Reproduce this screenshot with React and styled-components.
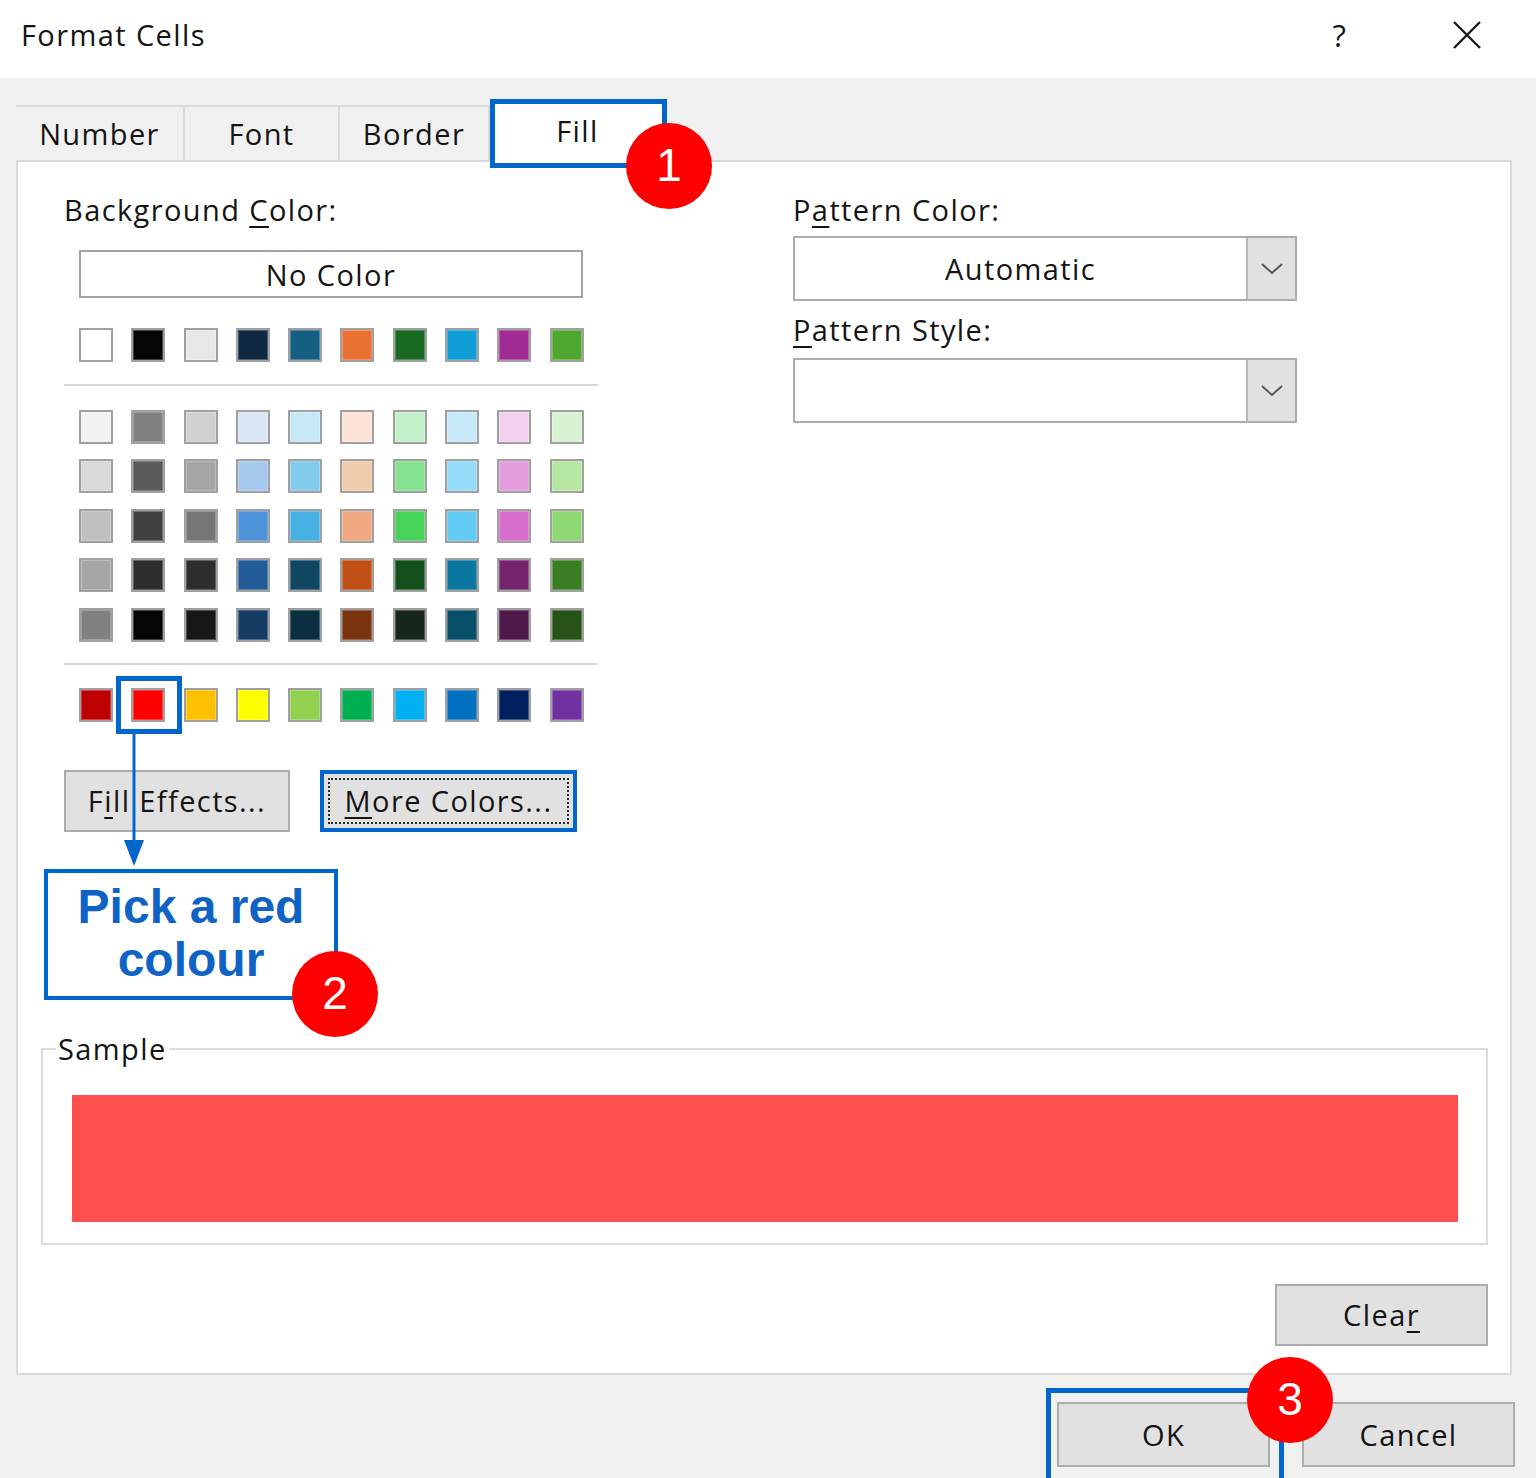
import React from "react";
import styled, { createGlobalStyle } from "styled-components";

const GlobalStyle = createGlobalStyle`
  html, body {
    margin: 0;
    padding: 0;
    background: #f0f0f0;
  }
  * {
    box-sizing: border-box;
  }
`;

const UI_FONT = `"Open Sans", "Noto Sans", sans-serif`;
const BLUE = "#0066cc";

const Window = styled.div`
  position: relative;
  width: 1536px;
  height: 1478px;
  overflow: hidden;
  background: #f0f0f0;
  font-family: ${UI_FONT};
  font-size: 29px;
  letter-spacing: 1.4px;
  color: #141414;
`;

const TitleBar = styled.div`
  display: flex;
  align-items: center;
  justify-content: space-between;
  height: 78px;
  padding: 0 54px 8px 21px;
  background: #ffffff;
`;

const Title = styled.div`
  font-size: 29px;
  line-height: 40px;
`;

const TitleControls = styled.div`
  display: flex;
  align-items: center;
  gap: 106px;
`;

const HelpGlyph = styled.span`
  font-size: 31px;
  line-height: 40px;
  letter-spacing: 0;
`;

const DialogBody = styled.div`
  padding: 27px 24px 0 16px;
`;

const TabStrip = styled.div`
  display: flex;
  align-items: flex-end;
  height: 55px;
`;

const Tab = styled.div`
  position: relative;
  display: flex;
  align-items: center;
  justify-content: center;
  width: ${(p) => p.$w}px;
  height: ${(p) => (p.$active ? 60 : 55)}px;
  margin-bottom: ${(p) => (p.$active ? -2 : 0)}px;
  padding-bottom: ${(p) => (p.$active ? 6 : 0)}px;
  background: ${(p) => (p.$active ? "#ffffff" : "#f0f0f0")};
  border-top: 2px solid #dadada;
  border-right: ${(p) => (p.$active ? "none" : "2px solid #dadada")};
  z-index: ${(p) => (p.$active ? 1 : 0)};
`;

const Panel = styled.div`
  height: 1215px;
  background: #ffffff;
  border: 2px solid #dadada;
`;

const TopArea = styled.div`
  display: grid;
  grid-template-columns: 729px 1fr;
  padding: 28px 0 0 46px;
`;

const Column = styled.div`
  display: flex;
  flex-direction: column;
  align-items: flex-start;
`;

const Label = styled.div`
  height: 40px;
  line-height: 40px;
  margin-top: ${(p) => p.$mt || 0}px;
`;

const NoColorBox = styled.div`
  display: flex;
  align-items: center;
  justify-content: center;
  width: 504px;
  height: 48px;
  margin: 20px 0 0 15px;
  border: 2px solid #a3a3a3;
  background: #ffffff;
`;

const SwatchGrid = styled.div`
  display: grid;
  grid-template-columns: repeat(10, 34px);
  column-gap: 18.3px;
  row-gap: 15.4px;
  margin: ${(p) => p.$mt}px 0 0 15px;
`;

const Swatch = styled.div`
  width: 34px;
  height: 34px;
  background: ${(p) => p.$color};
  border: 2px solid #a0a0a0;
  box-shadow: inset 0 0 0 1px rgba(255, 255, 255, 0.25);
`;

const Separator = styled.div`
  width: 534px;
  height: 2px;
  margin-top: ${(p) => p.$mt}px;
  background: #d6d6d6;
`;

const ButtonRow = styled.div`
  display: flex;
  gap: 30px;
  margin-top: 48px;
`;

const Button = styled.div`
  display: flex;
  align-items: center;
  justify-content: center;
  width: ${(p) => p.$w}px;
  height: ${(p) => p.$h || 62}px;
  padding: ${(p) => (p.$focused ? "4px" : "0")};
  background: #e1e1e1;
  border: ${(p) => (p.$focused ? `4px solid ${BLUE}` : "2px solid #adadad")};
`;

const FocusRing = styled.div`
  display: flex;
  align-items: center;
  justify-content: center;
  width: 100%;
  height: 100%;
  border: 2px dotted #2a2a2a;
`;

const Key = styled.span`
  text-decoration: underline;
  text-underline-offset: 5px;
  text-decoration-thickness: 2px;
`;

const Dropdown = styled.div`
  display: flex;
  width: 504px;
  height: 65px;
  margin-top: ${(p) => p.$mt}px;
  border: 2px solid #acacac;
  background: #ffffff;
`;

const DropdownValue = styled.div`
  flex: 1;
  display: flex;
  align-items: center;
  justify-content: center;
`;

const DropdownArrow = styled.div`
  display: flex;
  align-items: center;
  justify-content: center;
  width: 49px;
  background: #e1e1e1;
  border-left: 2px solid #b8b8b8;
`;

const SampleGroup = styled.fieldset`
  margin: 197px 22px 0 23px;
  padding: 0;
  border: 2px solid #dcdcdc;
  min-width: 0;
`;

const SampleLegend = styled.legend`
  margin-left: 13px;
  padding: 0 2px;
  height: 40px;
  line-height: 40px;
`;

const SampleFill = styled.div`
  height: 127px;
  margin: 26px 28px 21px 29px;
  background: #ff5050;
`;

const ClearRow = styled.div`
  display: flex;
  justify-content: flex-end;
  margin-top: 39px;
  padding-right: 22px;
`;

const FooterRow = styled.div`
  display: flex;
  justify-content: flex-end;
  gap: 32px;
  margin: 27px -3px 0 0;
`;

/* annotation overlays */
const Highlight = styled.div`
  position: absolute;
  border: ${(p) => p.$bw || 5}px solid ${BLUE};
  pointer-events: none;
  z-index: 5;
`;

const Badge = styled.div`
  position: absolute;
  width: 86px;
  height: 86px;
  border-radius: 50%;
  background: #ff0000;
  color: #ffffff;
  display: flex;
  align-items: center;
  justify-content: center;
  font-family: "Liberation Sans", Arial, sans-serif;
  font-size: 46px;
  letter-spacing: 0;
  padding-bottom: 2px;
  z-index: 7;
`;

const Callout = styled.div`
  position: absolute;
  left: 44px;
  top: 869px;
  width: 294px;
  height: 131px;
  border: 4px solid ${BLUE};
  background: #ffffff;
  display: flex;
  align-items: center;
  justify-content: center;
  text-align: center;
  font-family: "Liberation Sans", Arial, sans-serif;
  font-weight: bold;
  font-size: 48px;
  line-height: 53px;
  letter-spacing: 0;
  color: #0f63c4;
  padding-bottom: 4px;
  z-index: 5;
`;

const ArrowSvg = styled.svg`
  position: absolute;
  left: 119px;
  top: 732px;
  z-index: 6;
`;

const themeRow = [
  "#ffffff", "#050505", "#e8e8e8", "#0e2841", "#156082",
  "#e97132", "#196b24", "#0f9ed5", "#a02b93", "#4ea72e",
];

const shadeRows = [
  ["#f2f2f2", "#808080", "#d0d0d0", "#dae6f5", "#c7e8f7", "#fce3d6", "#c2f0c9", "#c8e9f7", "#f2d0ee", "#d9f2d1"],
  ["#d9d9d9", "#595959", "#a6a6a6", "#a6c8ec", "#83cceb", "#f1ccac", "#84e291", "#94dcf8", "#e59edd", "#b5e6a2"],
  ["#bfbfbf", "#404040", "#767676", "#4d93d9", "#45b0e1", "#f1a983", "#47d359", "#61cbf3", "#d86dcd", "#8ed973"],
  ["#a6a6a6", "#2e2e2e", "#2e2e2e", "#215c98", "#0f4761", "#c04f15", "#124f1a", "#0b76a0", "#74236c", "#3a7d22"],
  ["#808080", "#050505", "#171717", "#153d64", "#0a2f41", "#7a3410", "#16261a", "#074f69", "#4e1a4b", "#275317"],
];

const standardRow = [
  "#c00000", "#ff0000", "#ffc000", "#ffff00", "#92d050",
  "#00b050", "#00b0f0", "#0070c0", "#002060", "#7030a0",
];

const tabs = [
  { name: "Number", w: 169 },
  { name: "Font", w: 155 },
  { name: "Border", w: 150 },
  { name: "Fill", w: 175, active: true },
];

function Chevron() {
  return (
    <svg width="24" height="14" viewBox="0 0 24 14">
      <path d="M2 2 L12 11 L22 2" fill="none" stroke="#555" strokeWidth="2" />
    </svg>
  );
}

function CloseIcon() {
  return (
    <svg width="30" height="30" viewBox="0 0 30 30">
      <path d="M2 2 L28 28 M28 2 L2 28" stroke="#1a1a1a" strokeWidth="2.4" />
    </svg>
  );
}

export default function App() {
  return (
    <>
      <GlobalStyle />
      <Window>
        <TitleBar>
          <Title>Format Cells</Title>
          <TitleControls>
            <HelpGlyph>?</HelpGlyph>
            <CloseIcon />
          </TitleControls>
        </TitleBar>

        <DialogBody>
          <TabStrip>
            {tabs.map((t) => (
              <Tab key={t.name} $w={t.w} $active={t.active}>
                {t.name}
              </Tab>
            ))}
          </TabStrip>

          <Panel>
            <TopArea>
              <Column>
                <Label>
                  Background <Key>C</Key>olor:
                </Label>
                <NoColorBox>No Color</NoColorBox>
                <SwatchGrid $mt={30}>
                  {themeRow.map((c, i) => (
                    <Swatch key={i} $color={c} />
                  ))}
                </SwatchGrid>
                <Separator $mt={22} />
                <SwatchGrid $mt={24}>
                  {shadeRows.flat().map((c, i) => (
                    <Swatch key={i} $color={c} />
                  ))}
                </SwatchGrid>
                <Separator $mt={21} />
                <SwatchGrid $mt={23}>
                  {standardRow.map((c, i) => (
                    <Swatch key={i} $color={c} />
                  ))}
                </SwatchGrid>
                <ButtonRow>
                  <Button $w={226}>
                    <span>
                      F<Key>i</Key>ll Effects...
                    </span>
                  </Button>
                  <Button $w={257} $focused>
                    <FocusRing>
                      <span>
                        <Key>M</Key>ore Colors...
                      </span>
                    </FocusRing>
                  </Button>
                </ButtonRow>
              </Column>

              <Column>
                <Label>
                  P<Key>a</Key>ttern Color:
                </Label>
                <Dropdown $mt={6}>
                  <DropdownValue>Automatic</DropdownValue>
                  <DropdownArrow>
                    <Chevron />
                  </DropdownArrow>
                </Dropdown>
                <Label $mt={9}>
                  <Key>P</Key>attern Style:
                </Label>
                <Dropdown $mt={8}>
                  <DropdownValue />
                  <DropdownArrow>
                    <Chevron />
                  </DropdownArrow>
                </Dropdown>
              </Column>
            </TopArea>

            <SampleGroup>
              <SampleLegend>Sample</SampleLegend>
              <SampleFill />
            </SampleGroup>

            <ClearRow>
              <Button $w={213}>
                <span>
                  Clea<Key>r</Key>
                </span>
              </Button>
            </ClearRow>
          </Panel>

          <FooterRow>
            <Button $w={213} $h={65}>OK</Button>
            <Button $w={213} $h={65}>Cancel</Button>
          </FooterRow>
        </DialogBody>

        {/* step annotations */}
        <Highlight style={{ left: 490, top: 99, width: 177, height: 69 }} />
        <Badge style={{ left: 626, top: 123 }}>1</Badge>

        <Highlight style={{ left: 116, top: 676, width: 66, height: 58 }} />
        <ArrowSvg width="30" height="136" viewBox="0 0 30 136">
          <path d="M15 0 L15 112" stroke={BLUE} strokeWidth="3" />
          <path d="M5 108 L25 108 L15 134 Z" fill={BLUE} />
        </ArrowSvg>
        <Callout>
          Pick a red
          <br />
          colour
        </Callout>
        <Badge style={{ left: 292, top: 951 }}>2</Badge>

        <Highlight style={{ left: 1046, top: 1388, width: 238, height: 100 }} />
        <Badge style={{ left: 1247, top: 1357 }}>3</Badge>
      </Window>
    </>
  );
}
